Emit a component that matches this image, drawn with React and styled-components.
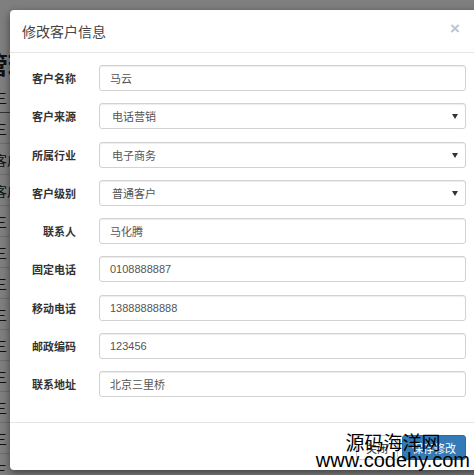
import React from "react";
import styled, { createGlobalStyle } from "styled-components";

const Global = createGlobalStyle`
  html, body { margin: 0; padding: 0; }
  body {
    width: 474px; height: 475px; overflow: hidden;
    font-family: "Liberation Sans", "Noto Sans CJK SC", sans-serif;
    background: #fff;
  }
`;

const Stage = styled.div`
  position: relative;
  width: 474px;
  height: 475px;
  overflow: hidden;
  background: #fff;
`;

const Behind = styled.div`
  margin-left: -16px;
  padding-top: 50px;
  color: #222;
`;

const BigTitle = styled.div`
  font-size: 24px;
  font-weight: bold;
  height: 32px;
  line-height: 32px;
`;

const BehindRow = styled.div`
  height: 30px;
  border-bottom: 1px solid ${(p) => (p.$dark ? "#666" : "#ddd")};
  display: flex;
  align-items: center;
  font-size: 13px;
  padding-left: 10px;
`;

const Backdrop = styled.div`
  position: absolute;
  inset: 0;
  background: rgba(0, 0, 0, 0.5);
`;

const Modal = styled.div`
  position: absolute;
  left: 10px;
  top: 10px;
  width: 480px;
  height: 460px;
  background: #fff;
  border-radius: 4px;
  box-shadow: 0 3px 9px rgba(0, 0, 0, 0.5);
  display: flex;
  flex-direction: column;
`;

const Header = styled.div`
  height: 43px;
  border-bottom: 1px solid #e5e5e5;
  display: flex;
  align-items: center;
  justify-content: space-between;
  padding: 0 30px 0 12px;
  box-sizing: border-box;
`;

const Title = styled.div`
  font-size: 14px;
  color: #444;
`;

const Close = styled.div`
  font-size: 17px;
  font-weight: bold;
  color: #c4c4c4;
  line-height: 1;
  margin-top: -6px;
`;

const Body = styled.div`
  padding-top: 12px;
  display: grid;
  grid-template-columns: 66px 367px;
  column-gap: 23px;
  row-gap: 12.3px;
  height: 357px;
  align-content: start;
`;

const Label = styled.div`
  height: 26px;
  display: flex;
  align-items: center;
  justify-content: flex-end;
  font-size: 11px;
  font-weight: bold;
  color: #333;
`;

const Field = styled.div`
  position: relative;
  height: 26px;
  box-sizing: border-box;
  border: 1px solid #d2d2d2;
  border-radius: 3px;
  box-shadow: inset 0 1px 1px rgba(0, 0, 0, 0.075);
  display: flex;
  align-items: center;
  padding-left: ${(p) => (p.$select ? "12px" : "10px")};
  font-size: 11px;
  color: #555;
`;

const Arrow = styled.span`
  position: absolute;
  right: 7px;
  top: 50%;
  margin-top: -2px;
  width: 0;
  height: 0;
  border-left: 3px solid transparent;
  border-right: 3px solid transparent;
  border-top: 5px solid #333;
`;

const Footer = styled.div`
  border-top: 1px solid #e5e5e5;
  display: flex;
  justify-content: flex-start;
  align-items: flex-start;
  padding: 12px 0 0 346px;
  gap: 4px;
  flex: 1;
`;

const Button = styled.div`
  height: 25px;
  box-sizing: border-box;
  padding: 0 9px;
  border-radius: 3px;
  font-size: 11px;
  display: flex;
  align-items: center;
  border: 1px solid ${(p) => (p.$primary ? "#2e6da4" : "#ccc")};
  background: ${(p) => (p.$primary ? "#337ab7" : "#fff")};
  color: ${(p) => (p.$primary ? "#fff" : "#333")};
`;

const Watermark = styled.div`
  position: absolute;
  right: 4px;
  bottom: 5px;
  display: flex;
  flex-direction: column;
  align-items: center;
  color: #000;
  line-height: 1;
  pointer-events: none;
`;

const WmCn = styled.div`
  font-family: "Noto Sans CJK SC", sans-serif;
  font-size: 19px;
  margin-bottom: -1px;
`;

const WmEn = styled.div`
  font-family: "Liberation Sans", sans-serif;
  font-size: 20px;
`;

const fields = [
  { label: "客户名称", value: "马云" },
  { label: "客户来源", value: "电话营销", select: true },
  { label: "所属行业", value: "电子商务", select: true },
  { label: "客户级别", value: "普通客户", select: true },
  { label: "联系人", value: "马化腾" },
  { label: "固定电话", value: "0108888887" },
  { label: "移动电话", value: "13888888888" },
  { label: "邮政编码", value: "123456" },
  { label: "联系地址", value: "北京三里桥" },
];

export default function App() {
  return (
    <Stage>
      <Global />
      <Behind>
        <BigTitle>管理</BigTitle>
        <BehindRow $dark>三</BehindRow>
        <BehindRow>三</BehindRow>
        <BehindRow>客户级</BehindRow>
        <BehindRow>客户名</BehindRow>
        <BehindRow>三</BehindRow>
        <BehindRow>三</BehindRow>
        <BehindRow>三</BehindRow>
        <BehindRow>三</BehindRow>
        <BehindRow>三</BehindRow>
        <BehindRow>三</BehindRow>
        <BehindRow>三</BehindRow>
        <BehindRow>三</BehindRow>
        <BehindRow>三</BehindRow>
      </Behind>
      <Backdrop />
      <Modal>
        <Header>
          <Title>修改客户信息</Title>
          <Close>×</Close>
        </Header>
        <Body>
          {fields.map((f) => (
            <React.Fragment key={f.label}>
              <Label>{f.label}</Label>
              <Field $select={f.select}>
                {f.value}
                {f.select && <Arrow />}
              </Field>
            </React.Fragment>
          ))}
        </Body>
        <Footer>
          <Button>关闭</Button>
          <Button $primary>保存修改</Button>
        </Footer>
      </Modal>
      <Watermark>
        <WmCn>源码海洋网</WmCn>
        <WmEn>www.codehy.com</WmEn>
      </Watermark>
    </Stage>
  );
}
